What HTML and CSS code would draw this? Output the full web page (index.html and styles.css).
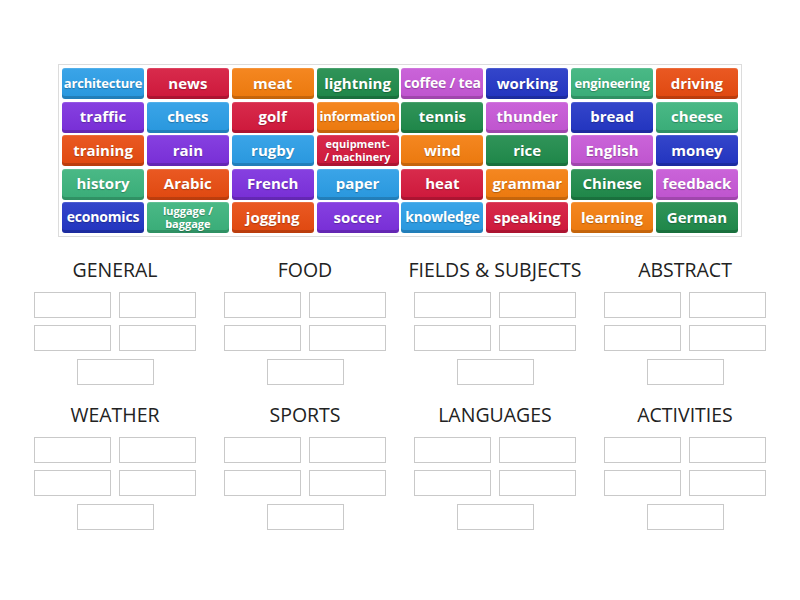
FILE: index.html
```html
<!DOCTYPE html>
<html lang="en">
<head>
    <meta charset="UTF-8">
    <meta name="viewport" content="width=device-width, initial-scale=1.0">
    <title>Group sort</title>
    <link rel="stylesheet" href="styles.css">
</head>
<body>
    <div id="pool">
        <div class="tile blue small">architecture</div>
        <div class="tile red">news</div>
        <div class="tile orange">meat</div>
        <div class="tile green">lightning</div>
        <div class="tile orchid mid">coffee / tea</div>
        <div class="tile navy">working</div>
        <div class="tile teal small">engineering</div>
        <div class="tile redorange">driving</div>

        <div class="tile purple">traffic</div>
        <div class="tile blue">chess</div>
        <div class="tile red">golf</div>
        <div class="tile orange small">information</div>
        <div class="tile green">tennis</div>
        <div class="tile orchid">thunder</div>
        <div class="tile navy">bread</div>
        <div class="tile teal">cheese</div>

        <div class="tile redorange">training</div>
        <div class="tile purple">rain</div>
        <div class="tile blue">rugby</div>
        <div class="tile red two">equipment-<br>/ machinery</div>
        <div class="tile orange">wind</div>
        <div class="tile green">rice</div>
        <div class="tile orchid">English</div>
        <div class="tile navy">money</div>

        <div class="tile teal">history</div>
        <div class="tile redorange">Arabic</div>
        <div class="tile purple">French</div>
        <div class="tile blue">paper</div>
        <div class="tile red">heat</div>
        <div class="tile orange">grammar</div>
        <div class="tile green">Chinese</div>
        <div class="tile orchid">feedback</div>

        <div class="tile navy mid">economics</div>
        <div class="tile teal two">luggage /<br>baggage</div>
        <div class="tile redorange">jogging</div>
        <div class="tile purple">soccer</div>
        <div class="tile blue mid">knowledge</div>
        <div class="tile red">speaking</div>
        <div class="tile orange">learning</div>
        <div class="tile green">German</div>
    </div>

    <div id="groups">
        <div class="group">
            <h2>GENERAL</h2>
            <div class="slots"><div></div><div></div><div></div><div></div><div></div></div>
        </div>
        <div class="group">
            <h2>FOOD</h2>
            <div class="slots"><div></div><div></div><div></div><div></div><div></div></div>
        </div>
        <div class="group">
            <h2>FIELDS &amp; SUBJECTS</h2>
            <div class="slots"><div></div><div></div><div></div><div></div><div></div></div>
        </div>
        <div class="group">
            <h2>ABSTRACT</h2>
            <div class="slots"><div></div><div></div><div></div><div></div><div></div></div>
        </div>
        <div class="group">
            <h2>WEATHER</h2>
            <div class="slots"><div></div><div></div><div></div><div></div><div></div></div>
        </div>
        <div class="group">
            <h2>SPORTS</h2>
            <div class="slots"><div></div><div></div><div></div><div></div><div></div></div>
        </div>
        <div class="group">
            <h2>LANGUAGES</h2>
            <div class="slots"><div></div><div></div><div></div><div></div><div></div></div>
        </div>
        <div class="group">
            <h2>ACTIVITIES</h2>
            <div class="slots"><div></div><div></div><div></div><div></div><div></div></div>
        </div>
    </div>
</body>
</html>
```

FILE: styles.css
```css
body{
    margin: 0;
    background: #fff;
    font-family: "Open Sans", "Liberation Sans", sans-serif;
}

#pool{
    width: 676px;
    margin: 64px 0 0 58px;
    padding: 3px;
    border: 1px solid #dcdcdc;
    display: grid;
    grid-template-columns: repeat(8, 82px);
    grid-auto-rows: 31px;
    column-gap: 2.85px;
    row-gap: 2.5px;
}

.tile{
    border-radius: 3px;
    color: #fff;
    font-weight: 700;
    font-size: 15px;
    display: flex;
    align-items: center;
    justify-content: center;
    text-align: center;
    white-space: nowrap;
    text-shadow: 0 1px 1px rgba(0, 0, 0, 0.25);
    box-shadow: inset 0 -3px 0 rgba(0, 0, 0, 0.16), inset 0 1px 0 rgba(255, 255, 255, 0.12);
    background-image: linear-gradient(rgba(255, 255, 255, 0.08), rgba(0, 0, 0, 0.04));
    padding-bottom: 2px;
    box-sizing: border-box;
}

.tile.small{ font-size: 13px; letter-spacing: -0.2px; }
.tile.mid{ font-size: 14px; letter-spacing: -0.2px; }
.tile.two{ font-size: 11px; line-height: 13px; padding-bottom: 1px; }

.blue{ background-color: #2a9de6; }
.red{ background-color: #d5193d; }
.orange{ background-color: #f47d0e; }
.green{ background-color: #1f8b4b; }
.orchid{ background-color: #c657d6; }
.navy{ background-color: #2336c6; }
.teal{ background-color: #3bb37c; }
.redorange{ background-color: #e84b10; }
.purple{ background-color: #7c30de; }

#groups{
    width: 760px;
    margin: 18.7px auto 0;
    display: grid;
    grid-template-columns: repeat(4, 190px);
    row-gap: 15.7px;
}

.group{
    display: flex;
    flex-direction: column;
    align-items: center;
}

.group h2{
    margin: 0 0 9.3px;
    font-size: 19.5px;
    font-weight: 400;
    line-height: 27px;
    color: #222;
    white-space: nowrap;
}

.slots{
    width: 162.5px;
    display: flex;
    flex-wrap: wrap;
    justify-content: center;
    column-gap: 8.5px;
    row-gap: 7.5px;
}

.slots div{
    width: 77px;
    height: 26px;
    border: 1px solid #c9c9c9;
    box-sizing: border-box;
}
```
